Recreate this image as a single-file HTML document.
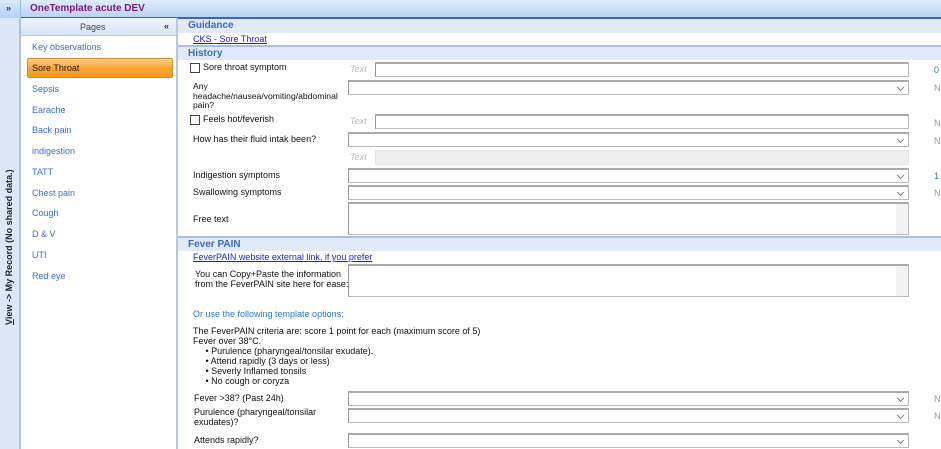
<!DOCTYPE html>
<html><head><meta charset="utf-8"><style>
*{margin:0;padding:0;box-sizing:border-box}
body{width:941px;height:449px;overflow:hidden;background:#fff;font-family:"Liberation Sans",sans-serif;font-size:9px;color:#111;position:relative}
.a{position:absolute;white-space:nowrap}
.title{left:0;top:0;width:941px;height:18px;background:linear-gradient(#e0ecfc,#b8d3f5);border-bottom:1px solid #3a66b5}
.strip{left:0;top:18px;width:21px;height:431px;background:#dce8f8;border-right:2px solid #a9c2e6}
.pages{left:21px;top:18px;width:157px;height:431px;background:#fff;border-right:2px solid #b7c9e2}
.ph{left:21px;top:18px;width:155px;height:18px;background:linear-gradient(#eef4fd,#d6e4f7);border-bottom:1px solid #b7c9e2}
.item{color:#3a6fd0;font-size:9px}
.sel{left:27px;top:58px;width:146px;height:20px;background:linear-gradient(#ffcf86,#f9a534 50%,#f69a1f);border:1px solid #d08a32;border-radius:2px}
.hdr{left:178px;width:763px;height:15px;background:#e3eaf7;border-top:2px solid #a6c0ea;color:#3b6bc7;font-weight:bold;font-size:10px;padding-left:10px;line-height:14px}
.lnk{color:#2222cc;text-decoration:underline}
.inp{position:absolute;border:1px solid #999;border-right-color:#bbb;border-bottom-color:#bbb;border-top:2px solid #aaa;background:#fff}
.sl::after{content:"";position:absolute;right:5px;top:3px;width:4px;height:4px;border-right:1px solid #777;border-bottom:1px solid #777;transform:rotate(45deg)}
.ta::after{content:"";position:absolute;right:0;top:0;width:12px;height:100%;background:#f2f2f2}
.ph2{color:#bbb;font-style:italic}
.cb{width:10px;height:10px;border:1px solid #444;background:#fff}
.n{color:#999}
.b{color:#3a6fd0}
</style></head><body>
<div class="a title"></div>
<div class="a" style="left:0;top:0;width:21px;height:18px;background:linear-gradient(#dbe8fa,#b6d1f3);border-right:1px solid #9cb8e0"></div>
<div class="a" style="left:6px;top:3px;font-size:9px;font-weight:bold;color:#335">»</div>
<div class="a" style="left:30px;top:3px;font-size:10px;font-weight:bold;color:#7a1a7a">OneTemplate acute DEV</div>
<div class="a strip"></div>
<div class="a" style="left:4px;top:325px;transform:rotate(-90deg);transform-origin:0 0;font-size:9px;font-weight:bold;color:#223;width:200px"><u>V</u>iew -&gt; My Record (No shared data.)</div>
<div class="a pages"></div>
<div class="a ph"></div>
<div class="a" style="left:80px;top:22px;color:#444">Pages</div>
<div class="a" style="left:164px;top:21px;font-weight:bold;color:#335">«</div>
<div class="a sel"></div>
<div class="a item" style="left:32px;top:42px">Key observations</div>
<div class="a" style="left:32px;top:63px;color:#222">Sore Throat</div>
<div class="a item" style="left:32px;top:84px">Sepsis</div>
<div class="a item" style="left:32px;top:105px">Earache</div>
<div class="a item" style="left:32px;top:125px">Back pain</div>
<div class="a item" style="left:32px;top:146px">indigestion</div>
<div class="a item" style="left:32px;top:167px">TATT</div>
<div class="a item" style="left:32px;top:188px">Chest pain</div>
<div class="a item" style="left:32px;top:208px">Cough</div>
<div class="a item" style="left:32px;top:229px">D &amp; V</div>
<div class="a item" style="left:32px;top:250px">UTI</div>
<div class="a item" style="left:32px;top:271px">Red eye</div>

<div class="a hdr" style="top:18px;border-top:1px solid #3a66b5">Guidance</div>
<div class="a lnk" style="left:193px;top:34px">CKS - Sore Throat</div>
<div class="a hdr" style="top:45px">History</div>

<div class="a cb" style="left:190px;top:63px"></div>
<div class="a" style="left:203px;top:62px">Sore throat symptom</div>
<div class="a ph2" style="left:350px;top:64px">Text</div>
<div class="inp" style="left:375px;top:62px;width:534px;height:15px"></div>
<div class="a b" style="left:934px;top:65px">0</div>

<div class="a" style="left:193px;top:82px;line-height:9.5px;white-space:normal;width:150px;font-size:8.6px">Any<br>headache/nausea/vomiting/abdominal<br>pain?</div>
<div class="inp sl" style="left:348px;top:80px;width:561px;height:15px"></div>
<div class="a n" style="left:934px;top:83px">N</div>

<div class="a cb" style="left:190px;top:115px"></div>
<div class="a" style="left:203px;top:114px">Feels hot/feverish</div>
<div class="a ph2" style="left:350px;top:116px">Text</div>
<div class="inp" style="left:375px;top:114px;width:534px;height:15px"></div>
<div class="a n" style="left:934px;top:118px">N</div>

<div class="a" style="left:193px;top:134px">How has their fluid intak been?</div>
<div class="inp sl" style="left:348px;top:132px;width:561px;height:15px"></div>
<div class="a n" style="left:934px;top:136px">N</div>

<div class="a ph2" style="left:350px;top:152px">Text</div>
<div class="a" style="left:375px;top:150px;width:534px;height:15px;background:#efefef;border:1px solid #e4e4e4"></div>

<div class="a" style="left:193px;top:170px">Indigestion symptoms</div>
<div class="inp sl" style="left:348px;top:168px;width:561px;height:15px"></div>
<div class="a b" style="left:934px;top:171px">1</div>

<div class="a" style="left:193px;top:187px">Swallowing symptoms</div>
<div class="inp sl" style="left:348px;top:185px;width:561px;height:15px"></div>
<div class="a n" style="left:934px;top:188px">N</div>

<div class="a" style="left:193px;top:214px">Free text</div>
<div class="inp ta" style="left:348px;top:202px;width:561px;height:33px"></div>

<div class="a hdr" style="top:236px">Fever PAIN</div>
<div class="a lnk" style="left:193px;top:252px">FeverPAIN website external link, if you prefer</div>
<div class="a" style="left:195px;top:270px;line-height:9.5px">You can Copy+Paste the information<br>from the FeverPAIN site here for ease:</div>
<div class="inp ta" style="left:348px;top:264px;width:561px;height:33px"></div>
<div class="a" style="left:193px;top:309px;color:#2a7ad0">Or use the following template options:</div>
<div class="a" style="left:193px;top:326px;line-height:10px">The FeverPAIN criteria are: score 1 point for each (maximum score of 5)<br>Fever over 38°C.<br>&nbsp;&nbsp;&nbsp;&nbsp;&nbsp;• Purulence (pharyngeal/tonsilar exudate).<br>&nbsp;&nbsp;&nbsp;&nbsp;&nbsp;• Attend rapidly (3 days or less)<br>&nbsp;&nbsp;&nbsp;&nbsp;&nbsp;• Severly Inflamed tonsils<br>&nbsp;&nbsp;&nbsp;&nbsp;&nbsp;• No cough or coryza</div>

<div class="a" style="left:194px;top:393px">Fever &gt;38? (Past 24h)</div>
<div class="inp sl" style="left:348px;top:391px;width:561px;height:15px"></div>
<div class="a n" style="left:934px;top:394px">N</div>
<div class="a" style="left:194px;top:408px;line-height:9.5px">Purulence (pharyngeal/tonsilar<br>exudates)?</div>
<div class="inp sl" style="left:348px;top:408px;width:561px;height:15px"></div>
<div class="a n" style="left:934px;top:411px">N</div>
<div class="a" style="left:194px;top:435px">Attends rapidly?</div>
<div class="inp sl" style="left:348px;top:433px;width:561px;height:15px"></div>
</body></html>
